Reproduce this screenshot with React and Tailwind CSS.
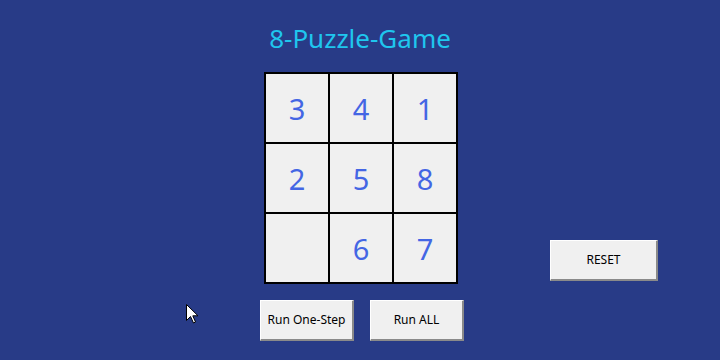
import React from "react";

const tiles = [3, 4, 1, 2, 5, 8, null, 6, 7];

function WinButton({ label, className }) {
  return (
    <button
      className={
        "flex items-center justify-center bg-[#f0f0f0] border-t border-l border-t-white border-l-white border-b-2 border-r-2 border-b-[#8a8a8a] border-r-[#8a8a8a] text-[12px] text-black leading-none " +
        className
      }
      style={{ fontFamily: '"Noto Sans", "Segoe UI", sans-serif' }}
    >
      {label}
    </button>
  );
}

export default function App() {
  return (
    <div
      className="relative w-[720px] h-[360px] bg-[#283b87] overflow-hidden flex flex-col"
      style={{ fontFamily: '"Noto Sans", sans-serif' }}
    >
      <div className="h-[72px] flex items-center justify-center pt-[4px]">
        <h1 className="text-[26px] leading-none text-[#1fc6ee] font-normal">8-Puzzle-Game</h1>
      </div>
      <div className="flex pl-[260px]">
        <div className="w-[204px] flex flex-col">
          <div className="ml-[4px] grid grid-cols-[62px_62px_62px] grid-rows-[68px_68px_68px] gap-[2px] p-[2px] bg-black w-[194px]">
            {tiles.map((t, i) => (
              <div
                key={i}
                className="bg-[#f0f0f0] flex items-center justify-center text-[29px] leading-none text-[#4466e4]"
              >
                {t ?? ""}
              </div>
            ))}
          </div>
          <div className="mt-[16px] flex gap-[16px]">
            <WinButton label="Run One-Step" className="w-[94px] h-[41px]" />
            <WinButton label="Run ALL" className="w-[94px] h-[41px]" />
          </div>
        </div>
        <div className="ml-[86px] pt-[168px]">
          <WinButton label="RESET" className="w-[108px] h-[41px]" />
        </div>
      </div>
      <svg
        className="absolute left-[186px] top-[304px]"
        width="13"
        height="20"
        viewBox="0 0 13 20"
      >
        <path
          d="M0.5 0.5 L0.5 16.5 L4.5 12.5 L7.5 19 L9.5 18 L6.8 11.8 L12 11.8 Z"
          fill="white"
          stroke="black"
          strokeWidth="1"
        />
      </svg>
    </div>
  );
}
